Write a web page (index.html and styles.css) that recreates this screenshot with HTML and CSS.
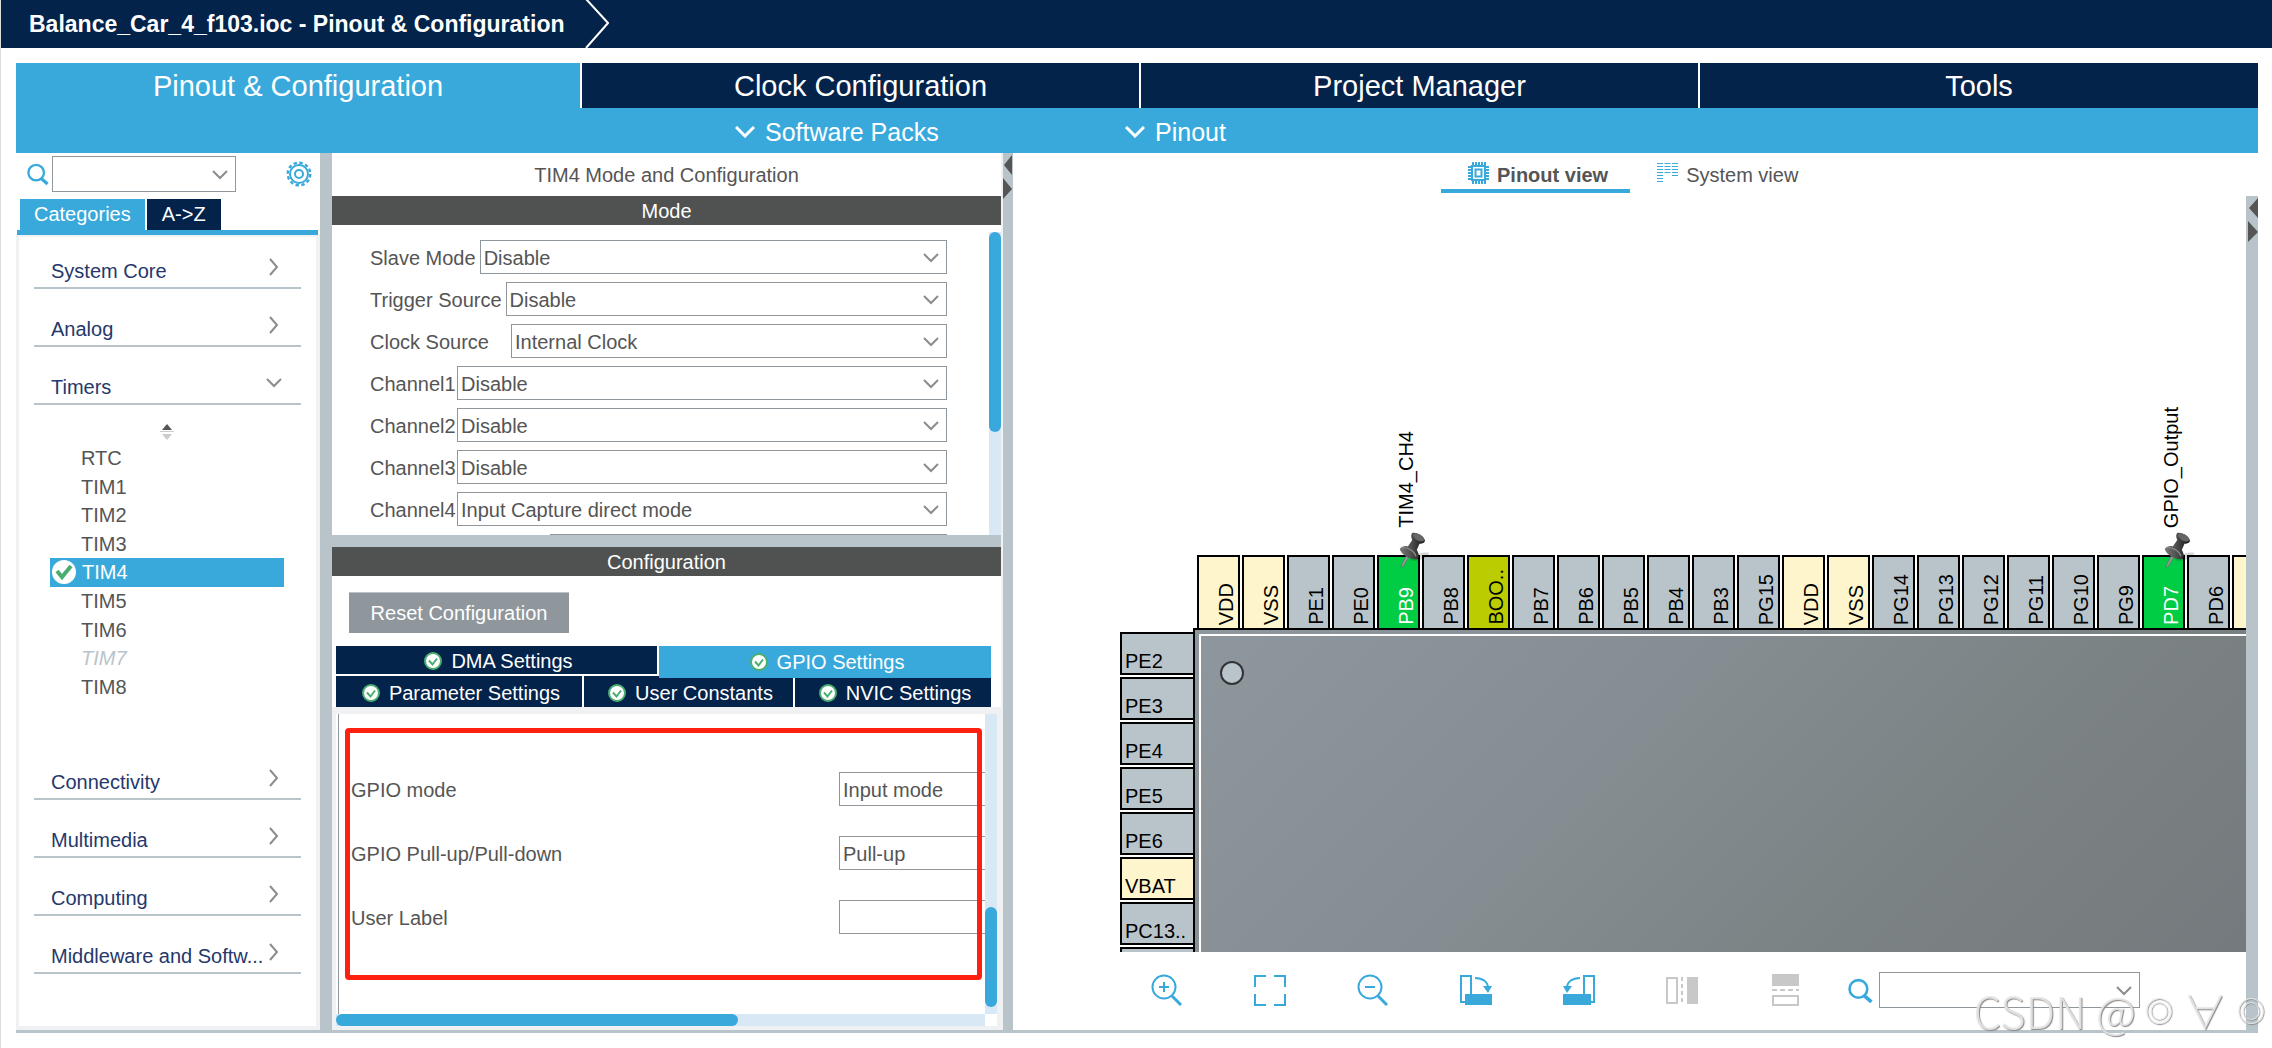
FILE: index.html
```html
<!DOCTYPE html>
<html lang="en">
<head>
<meta charset="utf-8">
<meta name="viewport" content="width=device-width, initial-scale=1">
<title>Balance_Car_4_f103.ioc - Pinout &amp; Configuration</title>
<link rel="stylesheet" href="styles.css">
</head>
<body>
<svg class="defs" aria-hidden="true">
  <defs>
    <linearGradient id="pin-body" x1="0" y1="0" x2="1" y2="0">
      <stop offset="0" stop-color="#777"/><stop offset=".4" stop-color="#555"/><stop offset="1" stop-color="#151515"/>
    </linearGradient>
  </defs>
  <symbol id="chev-right" viewBox="0 0 10 18"><path d="M1 1l7 8-7 8" fill="none" stroke="#8c8c8c" stroke-width="2"/></symbol>
  <symbol id="chev-down" viewBox="0 0 16 10"><path d="M1 1l7 7 7-7" fill="none" stroke="#8c8c8c" stroke-width="2"/></symbol>
  <symbol id="chev-white" viewBox="0 0 20 12"><path d="M1 1l9 9 9-9" fill="none" stroke="#fff" stroke-width="3"/></symbol>
  <symbol id="search" viewBox="0 0 24 24"><circle cx="10" cy="10.500" r="8.500" fill="none" stroke="#39a9dc" stroke-width="2.500"/><path d="M15.500 17l7 6" stroke="#39a9dc" stroke-width="3.500"/></symbol>
  <symbol id="check" viewBox="0 0 18 18"><circle cx="9" cy="9" r="8" fill="#fff" stroke="#4aae72" stroke-width="2"/><path d="M5 8.500l3.500 4L13 6.500" fill="none" stroke="#4aae72" stroke-width="2"/></symbol>
  <symbol id="pushpin" viewBox="0 0 40 40">
    <path d="M14 31c6-7 14-9 22-8-3 6-10 9-18 9z" fill="#000" opacity=".16"/>
    <path d="M10 27l-6 12 3-1 6-10z" fill="#999" stroke="#666" stroke-width=".6"/>
    <path d="M17 1c5-1 14 4 14 9-1 3-4 3-6 3l-3 7c2 3 3 7 1 10-6 2-18-4-20-11 2-3 6-4 9-3l5-7c-1-2-2-6 0-8z" fill="url(#pin-body)"/>
    <ellipse cx="24" cy="6" rx="7" ry="3.500" transform="rotate(30 24 6)" fill="#666"/>
    <path d="M5 18c4-2 14 2 16 9" fill="none" stroke="#888" stroke-width="1.500"/>
  </symbol>
</svg>

<header class="title-bar">
  <h1>Balance_Car_4_f103.ioc - Pinout &amp; Configuration</h1>
  <svg width="24" height="48" viewBox="0 0 24 48"><path d="M1-1l22 24L1 48" fill="none" stroke="#fff" stroke-width="2"/></svg>
</header>

<div class="app">
  <nav class="main-tabs">
    <button class="active">Pinout &amp; Configuration</button>
    <button>Clock Configuration</button>
    <button>Project Manager</button>
    <button>Tools</button>
  </nav>
  <div class="sub-bar">
    <button class="packs"><svg width="20" height="12"><use href="#chev-white"/></svg>Software Packs</button>
    <button><svg width="20" height="12"><use href="#chev-white"/></svg>Pinout</button>
  </div>

  <main class="workspace">
    <aside class="sidebar">
      <div class="sidebar-search">
        <svg width="22" height="22"><use href="#search"/></svg>
        <span class="combo"><select aria-label="Search peripheral"><option></option></select><svg width="16" height="10"><use href="#chev-down"/></svg></span>
        <button class="gear" aria-label="Settings">
          <svg width="26" height="26" viewBox="0 0 26 26" fill="none" stroke="#39a9dc"><circle cx="13" cy="13" r="9" stroke-width="2"/><circle cx="13" cy="13" r="11.300" stroke-width="2.400" stroke-dasharray="3.400 2.517"/><circle cx="13" cy="13" r="4" stroke-width="2"/></svg>
        </button>
      </div>
      <div class="sidebar-tabs">
        <button class="active">Categories</button>
        <button>A-&gt;Z</button>
      </div>
      <div class="categories">
        <button class="category">System Core<svg width="10" height="18"><use href="#chev-right"/></svg></button>
        <button class="category">Analog<svg width="10" height="18"><use href="#chev-right"/></svg></button>
        <button class="category">Timers<svg width="16" height="10"><use href="#chev-down"/></svg></button>
        <div class="timers">
          <svg class="sorter" width="14" height="16" viewBox="0 0 14 16"><path d="M7 0l5 6H2z" fill="#555"/><path d="M0 7.500h14" stroke="#ccc"/><path d="M2 10h10l-5 6z" fill="#ccc"/></svg>
          <ul>
            <li>RTC</li>
            <li>TIM1</li>
            <li>TIM2</li>
            <li>TIM3</li>
            <li class="selected"><svg width="24" height="24" viewBox="0 0 24 24"><circle cx="12" cy="12" r="12" fill="#fff"/><path d="M5 11l5 6 9-11" fill="none" stroke="#4aae72" stroke-width="4"/></svg>TIM4</li>
            <li>TIM5</li>
            <li>TIM6</li>
            <li class="disabled">TIM7</li>
            <li>TIM8</li>
          </ul>
        </div>
        <button class="category">Connectivity<svg width="10" height="18"><use href="#chev-right"/></svg></button>
        <button class="category">Multimedia<svg width="10" height="18"><use href="#chev-right"/></svg></button>
        <button class="category">Computing<svg width="10" height="18"><use href="#chev-right"/></svg></button>
        <button class="category">Middleware and Softw...<svg width="10" height="18"><use href="#chev-right"/></svg></button>
      </div>
    </aside>

    <div class="splitter"></div>

    <section class="peripheral">
      <h2 class="peripheral-title">TIM4 Mode and Configuration</h2>
      <h3 class="band">Mode</h3>
      <div class="mode">
        <div class="mode-form">
          <div class="mode-row"><label for="slave">Slave Mode</label><span class="combo"><select id="slave"><option>Disable</option></select><svg width="16" height="10"><use href="#chev-down"/></svg></span></div>
          <div class="mode-row"><label for="trigger">Trigger Source</label><span class="combo"><select id="trigger"><option>Disable</option></select><svg width="16" height="10"><use href="#chev-down"/></svg></span></div>
          <div class="mode-row"><label for="clock" class="wide">Clock Source</label><span class="combo"><select id="clock"><option>Internal Clock</option></select><svg width="16" height="10"><use href="#chev-down"/></svg></span></div>
          <div class="mode-row"><label for="ch1" class="channel">Channel1</label><span class="combo"><select id="ch1"><option>Disable</option></select><svg width="16" height="10"><use href="#chev-down"/></svg></span></div>
          <div class="mode-row"><label for="ch2" class="channel">Channel2</label><span class="combo"><select id="ch2"><option>Disable</option></select><svg width="16" height="10"><use href="#chev-down"/></svg></span></div>
          <div class="mode-row"><label for="ch3" class="channel">Channel3</label><span class="combo"><select id="ch3"><option>Disable</option></select><svg width="16" height="10"><use href="#chev-down"/></svg></span></div>
          <div class="mode-row"><label for="ch4" class="channel">Channel4</label><span class="combo"><select id="ch4"><option>Input Capture direct mode</option></select><svg width="16" height="10"><use href="#chev-down"/></svg></span></div>
          <div class="mode-next"></div>
        </div>
        <div class="v-scroll"><div class="mode-thumb"></div></div>
      </div>
      <div class="h-splitter"></div>
      <h3 class="band">Configuration</h3>
      <div class="config-head">
        <button class="reset">Reset Configuration</button>
        <div class="config-tabs first">
          <button class="dma"><svg width="18" height="18"><use href="#check"/></svg>DMA Settings</button>
          <button class="gpio"><svg width="18" height="18"><use href="#check"/></svg>GPIO Settings</button>
        </div>
        <div class="config-tabs second">
          <button class="param"><svg width="18" height="18"><use href="#check"/></svg>Parameter Settings</button>
          <button class="user"><svg width="18" height="18"><use href="#check"/></svg>User Constants</button>
          <button class="nvic"><svg width="18" height="18"><use href="#check"/></svg>NVIC Settings</button>
        </div>
      </div>
      <div class="config-body">
        <div class="gpio-form">
          <div class="gpio-row"><label for="gmode">GPIO mode</label><select id="gmode"><option>Input mode</option></select></div>
          <div class="gpio-row"><label for="gpull">GPIO Pull-up/Pull-down</label><select id="gpull"><option>Pull-up</option></select></div>
          <div class="gpio-row"><label for="glabel">User Label</label><input id="glabel" type="text"></div>
          <div class="highlight"></div>
        </div>
        <div class="v-scroll low"><div class="gpio-thumb"></div></div>
        <div class="h-scroll"><div class="h-thumb"></div></div>
        <div class="corner"></div>
      </div>
    </section>

    <div class="splitter narrow">
      <svg width="10" height="44" viewBox="0 0 10 44" fill="#555"><path d="M9 0v20L1 10zM0 23l9 11-9 10z"/></svg>
    </div>

    <section class="pinout">
      <div class="view-tabs">
        <button class="active">
          <svg width="21" height="22" viewBox="0 0 21 22" fill="none" stroke="#39a9dc"><path d="M4 2h14M4 20h14" stroke-width="4" stroke-dasharray="2 1"/><path d="M2 4v14M19 4v14" stroke-width="4" stroke-dasharray="2 1"/><rect x="4" y="4" width="13" height="14" stroke-width="2" fill="#fff"/><rect x="7.500" y="7.500" width="6" height="7" stroke-width="2"/></svg>Pinout view</button>
        <button>
          <svg width="21" height="20" viewBox="0 0 21 20" stroke="#39a9dc"><path d="M0 .5h21M0 3.500h21M0 6.500h21M0 9.500h21" stroke-dasharray="6 1.500"/><path d="M0 12.500h6M15 12.500h6M0 15.500h6M0 18.500h6"/></svg>System view</button>
      </div>
      <div class="canvas-area">
        <div class="canvas-col">
          <div class="canvas">
            <div class="pins-top">
              <div class="pin power"><span>VDD</span></div>
              <div class="pin power"><span>VSS</span></div>
              <div class="pin"><span>PE1</span></div>
              <div class="pin"><span>PE0</span></div>
              <div class="pin used"><span>PB9</span><em>TIM4_CH4</em><svg width="36" height="42"><use href="#pushpin"/></svg></div>
              <div class="pin"><span>PB8</span></div>
              <div class="pin boot"><span>BOO..</span></div>
              <div class="pin"><span>PB7</span></div>
              <div class="pin"><span>PB6</span></div>
              <div class="pin"><span>PB5</span></div>
              <div class="pin"><span>PB4</span></div>
              <div class="pin"><span>PB3</span></div>
              <div class="pin"><span>PG15</span></div>
              <div class="pin power"><span>VDD</span></div>
              <div class="pin power"><span>VSS</span></div>
              <div class="pin"><span>PG14</span></div>
              <div class="pin"><span>PG13</span></div>
              <div class="pin"><span>PG12</span></div>
              <div class="pin"><span>PG11</span></div>
              <div class="pin"><span>PG10</span></div>
              <div class="pin"><span>PG9</span></div>
              <div class="pin used"><span>PD7</span><em>GPIO_Output</em><svg width="36" height="42"><use href="#pushpin"/></svg></div>
              <div class="pin"><span>PD6</span></div>
              <div class="pin power"></div>
            </div>
            <div class="chip-row">
              <div class="pins-left">
                <div class="pin">PE2</div>
                <div class="pin">PE3</div>
                <div class="pin">PE4</div>
                <div class="pin">PE5</div>
                <div class="pin">PE6</div>
                <div class="pin power">VBAT</div>
                <div class="pin">PC13..</div>
                <div class="pin"></div>
              </div>
              <div class="chip"><div class="chip-face"><i class="pin-one"></i></div></div>
            </div>
          </div>
          <div class="toolbar">
            <button aria-label="Zoom in"><svg width="32" height="32" viewBox="0 0 32 32" fill="none" stroke="#39a9dc" stroke-width="2"><circle cx="13" cy="13" r="11.500"/><path d="M8 13h10M13 8v10"/><path d="M21 22l9 9" stroke-width="3"/></svg></button>
            <button aria-label="Best fit"><svg width="32" height="32" viewBox="0 0 32 32" fill="none" stroke="#39a9dc" stroke-width="2"><path d="M1 13V2h11M20 2h11v11M31 20v11H20M12 31H1V20"/></svg></button>
            <button aria-label="Zoom out"><svg width="32" height="32" viewBox="0 0 32 32" fill="none" stroke="#39a9dc" stroke-width="2"><circle cx="13" cy="13" r="11.500"/><path d="M8 13h10"/><path d="M21 22l9 9" stroke-width="3"/></svg></button>
            <button aria-label="Rotate clockwise"><svg width="32" height="32" viewBox="0 0 32 32"><path d="M1 2h10v26H1z" fill="#fff" stroke="#39a9dc" stroke-width="2"/><path d="M5 20h27v11H5z" fill="#39a9dc"/><path d="M15 4c8 0 13 4 13 10" fill="none" stroke="#39a9dc" stroke-width="2"/><path d="M23 12h9l-4 7z" fill="#39a9dc"/></svg></button>
            <button aria-label="Rotate counterclockwise"><svg width="32" height="32" viewBox="0 0 32 32"><path d="M21 2h10v26H21z" fill="#fff" stroke="#39a9dc" stroke-width="2"/><path d="M0 20h28v11H0z" fill="#39a9dc"/><path d="M17 4c-8 0-13 4-13 10" fill="none" stroke="#39a9dc" stroke-width="2"/><path d="M0 12h9l-5 7z" fill="#39a9dc"/></svg></button>
            <button aria-label="Flip horizontally"><svg width="32" height="32" viewBox="0 0 32 32"><path d="M1 4h10v25H1z" fill="#fff" stroke="#c8c8c8" stroke-width="2"/><path d="M16 3v27" stroke="#c8c8c8" stroke-width="2" stroke-dasharray="4 3"/><path d="M21 3h11v27H21z" fill="#c8c8c8"/></svg></button>
            <button aria-label="Flip vertically"><svg width="32" height="32" viewBox="0 0 32 32"><path d="M3 0h27v12H3z" fill="#c8c8c8"/><path d="M3 16h27" stroke="#c8c8c8" stroke-width="2" stroke-dasharray="5 3"/><path d="M4 22h25v9H4z" fill="#fff" stroke="#c8c8c8" stroke-width="2"/></svg></button>
            <svg class="find" width="25" height="25"><use href="#search"/></svg>
            <span class="combo"><select aria-label="Find pin"><option></option></select><svg width="16" height="10"><use href="#chev-down"/></svg></span>
          </div>
        </div>
        <div class="side-rail">
          <svg width="10" height="44" viewBox="0 0 10 44" fill="#555"><path d="M10 0v20L1 10zM0 23l10 11-10 10z"/></svg>
        </div>
      </div>
    </section>
  </main>
</div>
<div class="watermark">CSDN @<b>◎</b><b class="tall">∀</b><b>◎</b></div>
</body>
</html>
```
FILE: styles.css
```css
:root {
  --navy: #03234b;
  --blue: #39a9dc;
  --steel: #b8c4ca;
  --pale: #eff1f3;
  --track: #d9e8f5;
  --text: #555;
}

* { box-sizing: border-box; }

body {
  margin: 0;
  height: 100vh;
  display: flex;
  flex-direction: column;
  overflow: hidden;
  border-left: 1px solid #ddd;
  background: #fff;
  color: var(--text);
  font: 20px/24px "Liberation Sans", Arial, sans-serif;
}

h1, h2, h3, ul { margin: 0; padding: 0; font-weight: normal; }

button, select, input { font: inherit; color: inherit; border: 0; border-radius: 0; background: none; padding: 0; margin: 0; }

svg { display: block; flex: none; }

.defs { position: absolute; width: 0; height: 0; }

/* Title and main tabs */
.title-bar { display: flex; align-items: center; gap: 20px; height: 48px; flex: none; padding-left: 28px; background: var(--navy); color: #fff; }
.title-bar h1 { font-size: 23px; font-weight: bold; }

.app { flex: 1; min-height: 0; display: flex; flex-direction: column; margin: 15px 14px 15px 15px; }

.main-tabs { display: grid; grid-template-columns: 564fr 557fr 557fr 558fr; gap: 2px; height: 45px; flex: none; }
.main-tabs button { padding-top: 2px; background: var(--navy); color: #fff; font-size: 29px; line-height: 43px; }
.main-tabs .active { background: var(--blue); }

.sub-bar { display: grid; grid-template-columns: 719fr 390fr 1133fr; height: 45px; flex: none; background: var(--blue); }
.sub-bar button { display: flex; align-items: center; gap: 10px; padding-top: 2px; color: #fff; font-size: 25px; }
.sub-bar .packs { grid-column: 2; }

.workspace {
  flex: 1;
  min-height: 0;
  display: grid;
  grid-template-columns: 304px 12px minmax(560px, 671fr) 10px minmax(0, 1245fr);
  grid-template-rows: minmax(0, 1fr);
  border-bottom: 3px solid var(--steel);
}

.splitter { background: var(--steel); }
.splitter.narrow { padding-top: 2px; }

/* Drop-downs */
.combo { position: relative; display: block; }
.combo select { display: block; width: 100%; height: 100%; appearance: none; border: 1px solid #8f979d; padding: 1px 30px 0 3px; background: #fff; }
.combo svg { position: absolute; right: 8px; top: 50%; margin-top: -4px; pointer-events: none; }

/* Sidebar */
.sidebar { display: flex; flex-direction: column; }
.sidebar-search { display: flex; align-items: center; gap: 3px; height: 43px; padding: 0 8px 2px 11px; }
.sidebar-search .combo { width: 184px; height: 36px; }
.gear { margin-left: auto; }
.sidebar-tabs { display: flex; gap: 2px; padding: 3px 3px 0 3px; height: 39px; margin: 0 2px 0 1px; border-bottom: 5px solid var(--blue); }
.sidebar-tabs button { padding: 0 15px; background: var(--navy); color: #fff; line-height: 31px; }
.sidebar-tabs .active { padding: 0 14px; background: var(--blue); }

.categories { flex: 1; display: flex; flex-direction: column; gap: 16px; padding: 10px 15px 0; border: solid var(--pale); border-width: 2px 4px 4px 3px; }
.category { display: flex; align-items: center; justify-content: space-between; height: 42px; flex: none; padding: 8px 22px 0 17px; border-bottom: 2px solid var(--steel); color: #24386b; line-height: 24px; white-space: nowrap; }
.category svg { margin-bottom: 8px; }
.category svg[width="16"] { margin-right: -3px; }

.timers { height: 321px; flex: none; padding: 3px 17px 0 16px; }
.sorter { margin: 0 auto 4px 110px; }
.timers ul { display: grid; grid-auto-rows: 1fr; height: 257px; list-style: none; }
.timers li { display: flex; align-items: center; gap: 6px; padding-left: 31px; }
.timers .selected { padding-left: 2px; background: var(--blue); color: #fff; }
.timers .disabled { color: #b8c4ca; font-style: italic; }

/* Peripheral panel */
.peripheral { display: flex; flex-direction: column; min-height: 0; border-right: 2px solid var(--pale); }
.peripheral-title { padding-top: 2px; font-size: 20px; line-height: 41px; text-align: center; }
.band { flex: none; padding-top: 2px; background: #505251; color: #fff; font-size: 20px; line-height: 27px; text-align: center; }

.mode { flex: none; height: 310px; overflow: hidden; display: flex; justify-content: space-between; gap: 42px; padding: 7px 0 0 38px; }
.mode-form { flex: 1; display: flex; flex-direction: column; gap: 8px; padding-top: 8px; }
.mode-row { display: flex; align-items: center; gap: 4px; height: 34px; flex: none; }
.mode-row label { padding-top: 1px; }
.mode-row .wide { width: 137px; }
.mode-row .channel { width: 83px; }
.mode-row .combo { flex: 1; height: 34px; }
.mode-next { margin-left: 180px; flex: none; height: 34px; border: 1px solid #8f979d; }

.v-scroll { width: 12px; background: var(--track); }
.mode-thumb { height: 200px; border-radius: 6px; background: var(--blue); }
.h-splitter { height: 12px; flex: none; background: var(--steel); }

.config-head { flex: none; padding: 16px 10px 0 4px; }
.reset { display: block; width: 220px; height: 41px; margin: 0 0 13px 13px; border-top: 1px solid var(--steel); background: #8f979d; color: #fff; }
.config-tabs { display: grid; gap: 2px; }
.config-tabs.first { grid-template-columns: 321fr 332fr; height: 30px; }
.config-tabs.second { grid-template-columns: 246fr 209fr 196fr; height: 31px; }
.config-tabs button { display: flex; align-items: center; justify-content: center; gap: 9px; padding: 2px 0 0 4px; background: var(--navy); color: #fff; }
.config-tabs .dma { height: 28px; }
.config-tabs .gpio { height: 32px; padding-top: 0; background: var(--blue); z-index: 1; }

.config-body { flex: 1; min-height: 0; display: grid; grid-template: minmax(0, 1fr) 12px / minmax(0, 1fr) 12px; border: solid var(--pale); border-width: 7px 4px 4px; }
.gpio-form { position: relative; display: flex; flex-direction: column; gap: 30px; overflow: hidden; padding: 58px 0 0 12px; margin-left: 2px; border-left: 1px solid #8f979d; background: #fff; }
.gpio-row { display: flex; align-items: center; height: 34px; flex: none; }
.gpio-row label { width: 488px; flex: none; padding-top: 2px; }
.gpio-row select, .gpio-row input { flex: 1; min-width: 0; height: 34px; appearance: none; border: 1px solid #8f979d; border-right: 0; padding: 2px 0 0 3px; background: #fff; }
.highlight { position: absolute; left: 6px; right: 3px; top: 14px; height: 252px; border: 5px solid #ff2010; border-radius: 4px; pointer-events: none; }
.v-scroll.low { display: flex; flex-direction: column; justify-content: flex-end; padding-bottom: 7px; }
.gpio-thumb { height: 100px; border-radius: 6px; background: var(--blue); }
.h-scroll { background: var(--track); }
.h-thumb { width: 62%; height: 12px; border-radius: 6px; background: var(--blue); }
.corner { background: #fff; }

/* Pinout view */
.pinout { display: flex; flex-direction: column; min-height: 0; }
.view-tabs { display: flex; height: 43px; flex: none; padding-left: 428px; }
.view-tabs button { display: flex; align-items: center; gap: 8px; height: 40px; padding: 7px 22px 0 27px; border-bottom: 4px solid transparent; white-space: nowrap; }
.view-tabs svg { margin-bottom: 4px; }
.view-tabs .active { border-color: var(--blue); font-weight: bold; }

.canvas-area { flex: 1; min-height: 0; display: flex; }
.canvas-col { flex: 1; min-width: 0; display: flex; flex-direction: column; }
.side-rail { width: 12px; flex: none; padding: 2px 0 0 2px; background: var(--steel); }

.canvas { flex: 1; min-height: 0; display: flex; flex-direction: column; overflow: hidden; padding: 359px 0 0 107px; color: #000; }
.pin { flex: none; border: 2px solid #000; background: var(--steel); }
.pin.power { background: #fff5cc; }
.pin.boot { background: #bbcc00; }
.pin.used { background: #00cc44; color: #fff; }

.pins-top { display: flex; gap: 2px; flex: none; padding-left: 77px; }
.pins-top .pin { position: relative; width: 43px; height: 73px; border-bottom: 0; }
.pins-top span, .pins-top em { position: absolute; right: 0; bottom: 3px; writing-mode: vertical-rl; transform: rotate(180deg); font-style: normal; white-space: nowrap; }
.pins-top em { bottom: 100px; color: #000; }
.pins-top svg { position: absolute; left: 18px; top: -28px; z-index: 1; }

.chip-row { flex: 1; min-height: 0; display: flex; }
.pins-left { width: 73px; flex: none; display: flex; flex-direction: column; gap: 2px; padding-top: 4px; }
.pins-left .pin { height: 43px; padding: 15px 0 0 3px; border-right: 0; }
.chip { flex: 1; padding: 4px 0 0 4px; border: solid #000; border-width: 2px 0 0 2px; background: linear-gradient(135deg, #8f979e, #858d92 40%, #7b8284 70%, #747a7d); }
.chip-face { height: 100%; padding: 25px 0 0 19px; border: solid #fff; border-width: 2px 0 0 2px; }
.pin-one { display: block; width: 24px; height: 24px; border: 2px solid #333; border-radius: 50%; background: var(--steel); }

.toolbar { display: flex; align-items: center; gap: 71px; height: 78px; flex: none; padding: 0 0 2px 138px; }
.toolbar .find { margin-left: -24px; }
.toolbar .combo { width: 261px; height: 36px; margin-left: -65px; }

.watermark { position: fixed; right: -2px; bottom: 8px; display: flex; align-items: center; color: rgba(232, 232, 232, .9); font: 300 44px/60px "Noto Sans CJK SC", sans-serif; text-shadow: 1px 1px 1px #888; pointer-events: none; }
.watermark b { width: 46px; font-weight: 300; font-size: 28px; text-align: center; }
.watermark .tall { font-size: 44px; }
```
